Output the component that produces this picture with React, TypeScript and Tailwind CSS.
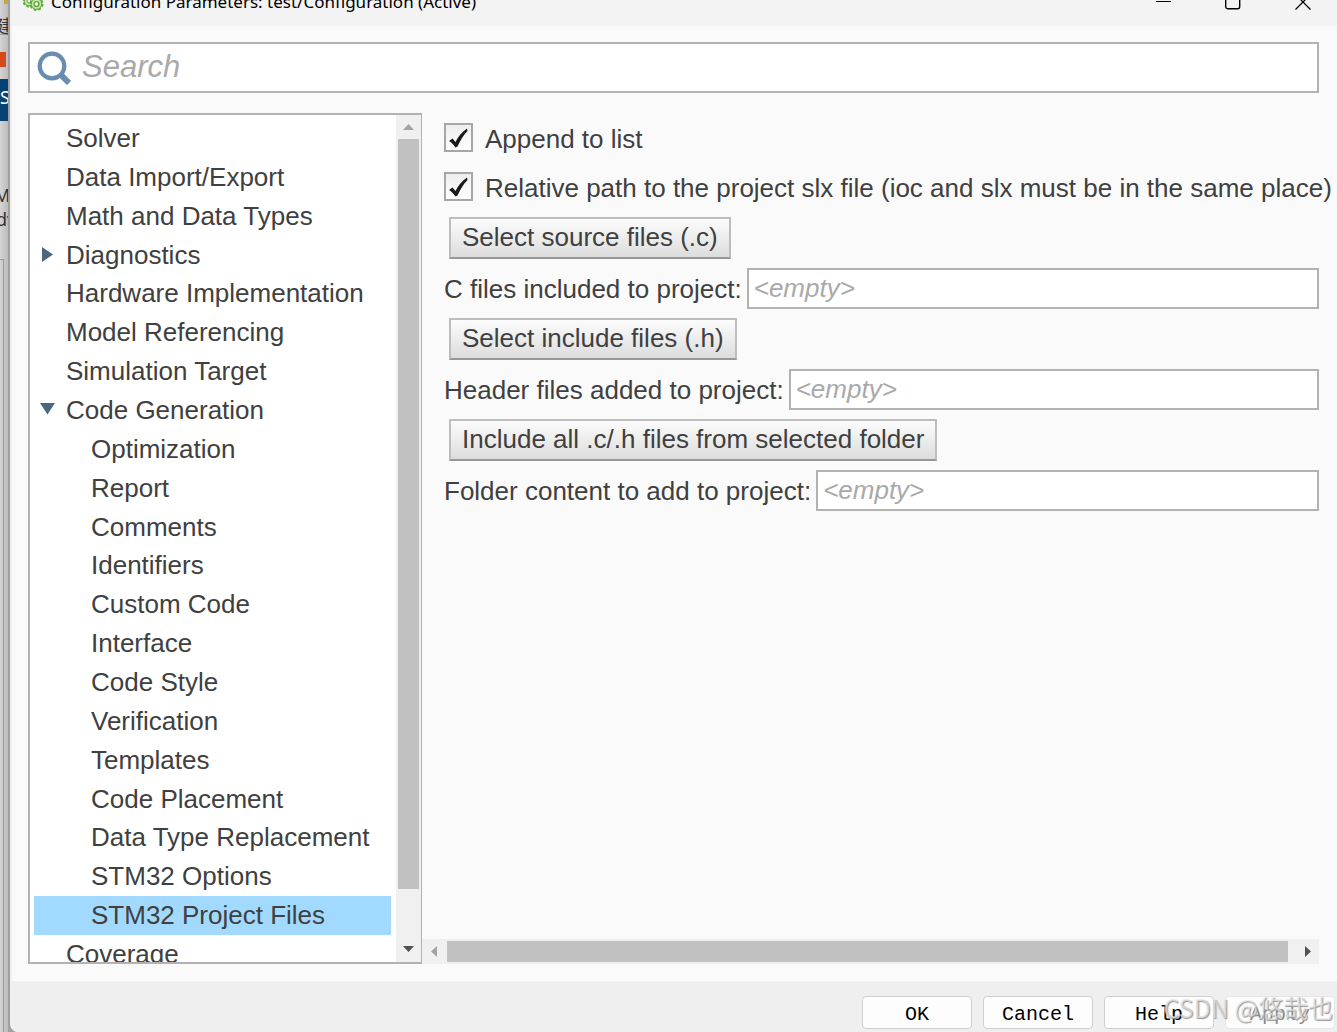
import { useState } from "react";

interface TreeItem {
  label: string;
  nested?: boolean;
  state?: "open" | "closed";
}

interface FileRow {
  id: string;
  action: string;
  label: string;
}

const treeItems: TreeItem[] = [
  { label: "Solver" },
  { label: "Data Import/Export" },
  { label: "Math and Data Types" },
  { label: "Diagnostics", state: "closed" },
  { label: "Hardware Implementation" },
  { label: "Model Referencing" },
  { label: "Simulation Target" },
  { label: "Code Generation", state: "open" },
  { label: "Optimization", nested: true },
  { label: "Report", nested: true },
  { label: "Comments", nested: true },
  { label: "Identifiers", nested: true },
  { label: "Custom Code", nested: true },
  { label: "Interface", nested: true },
  { label: "Code Style", nested: true },
  { label: "Verification", nested: true },
  { label: "Templates", nested: true },
  { label: "Code Placement", nested: true },
  { label: "Data Type Replacement", nested: true },
  { label: "STM32 Options", nested: true },
  { label: "STM32 Project Files", nested: true },
  { label: "Coverage" },
];

const fileRows: FileRow[] = [
  { id: "c-files", action: "Select source files (.c)", label: "C files included to project:" },
  { id: "h-files", action: "Select include files (.h)", label: "Header files added to project:" },
  { id: "folder", action: "Include all .c/.h files from selected folder", label: "Folder content to add to project:" },
];

function GearsIcon() {
  return (
    <svg className="h-5 w-[22px] shrink-0" viewBox="0 0 22 20" fill="none">
      <g stroke="#5da53f" fill="#c4e8a2">
        <circle cx="7" cy="9" r="5.5" strokeWidth="2" strokeDasharray="2.4 1.9" />
        <circle cx="7" cy="9" r="4.8" />
        <circle cx="7" cy="9" r="2" fill="#fff" />
        <circle cx="14.5" cy="12" r="6" strokeWidth="2" strokeDasharray="2.6 2.1" />
        <circle cx="14.5" cy="12" r="5.3" />
        <circle cx="14.5" cy="12" r="2.4" fill="#fff" strokeWidth="1.4" />
      </g>
    </svg>
  );
}

function SearchIcon() {
  return (
    <svg className="h-[34px] w-[34px] shrink-0" viewBox="0 0 34 34" fill="none" stroke="#6a8caf">
      <circle cx="15" cy="15" r="12.3" strokeWidth="4.2" />
      <path d="M23 23 32 32" strokeWidth="6" />
    </svg>
  );
}

function TitleBar() {
  return (
    <header className="-mt-[22px] flex h-12 shrink-0 items-center bg-[#f3f3f3] pl-2.5 pr-[26px]">
      <GearsIcon />
      <h1 className="ml-[7px] flex-1 whitespace-nowrap font-['Noto_Sans'] text-[17px] text-black">
        Configuration Parameters: test/Configuration (Active)
      </h1>
      <div className="flex items-center gap-[54px]">
        <button type="button" aria-label="Minimize">
          <svg className="h-4 w-4" viewBox="0 0 16 16" stroke="#000" fill="none">
            <path d="M1 7.5h15" />
          </svg>
        </button>
        <button type="button" aria-label="Maximize">
          <svg className="h-4 w-4" viewBox="0 0 16 16" stroke="#000" fill="none">
            <rect x=".7" y=".7" width="14" height="14" rx="2" strokeWidth="1.4" />
          </svg>
        </button>
        <button type="button" aria-label="Close">
          <svg className="h-4 w-4" viewBox="0 0 16 16" stroke="#000" fill="none" strokeWidth="1.3">
            <path d="M.5 .5l15 15M15.5 .5l-15 15" />
          </svg>
        </button>
      </div>
    </header>
  );
}

function ConfigTree() {
  const [selected, setSelected] = useState("STM32 Project Files");

  return (
    <nav aria-label="Configuration" className="flex w-[394px] shrink-0 overflow-hidden border-2 border-r border-[#b2b2b2] bg-white">
      <ul className="mt-1 grid h-[855px] flex-1 auto-rows-fr pl-1 pr-[5px]">
        {treeItems.map((item) => (
          <li key={item.label} className="flex">
            <button
              type="button"
              onClick={() => setSelected(item.label)}
              className={`flex w-full items-center whitespace-nowrap pb-px text-left ${item.nested ? "pl-[57px]" : "pl-1.5"} ${
                selected === item.label ? "bg-[#a2d9ff]" : ""
              }`}
            >
              {!item.nested && (
                <svg className="mr-[9px] h-4 w-[17px] shrink-0" viewBox="0 0 17 16" fill="#4d6680">
                  {item.state === "closed" && <path d="M2 0 13 7.5 2 15z" />}
                  {item.state === "open" && <path d="M0 1h15L7.5 12.5z" />}
                </svg>
              )}
              {item.label}
            </button>
          </li>
        ))}
      </ul>
      <div className="flex w-[25px] flex-col items-center bg-[#f0f0f0]">
        <svg className="h-6 w-6 shrink-0" viewBox="0 0 24 24" fill="#a3a3a3">
          <path d="M6 15h11l-5.500-6z" />
        </svg>
        <div className="h-[750px] w-[21px] bg-[#c1c1c1]" />
        <svg className="mt-auto h-6 w-6 shrink-0" viewBox="0 0 24 24" fill="#505050">
          <path d="M6 8h11l-5.500 6z" />
        </svg>
      </div>
    </nav>
  );
}

function CheckField({ id, label }: { id: string; label: string }) {
  const [checked, setChecked] = useState(true);

  return (
    <div className="flex items-start gap-3">
      <span className="relative h-[29px] w-[29px] shrink-0">
        <input
          id={id}
          type="checkbox"
          checked={checked}
          onChange={(e) => setChecked(e.target.checked)}
          className="block h-full w-full appearance-none border-2 border-[#a6a6a6] bg-linear-to-b from-[#eeeeee] to-white"
        />
        {checked && (
          <svg className="pointer-events-none absolute inset-0" viewBox="0 0 29 29" fill="#1a1a1a">
            <path d="M5 18 8.500 15.500 11.500 19C14 14 17.500 9 23 5.500L23.500 8C19 12.500 16 18 13.500 23.500L11.500 24.500C10 22 7.500 19.500 5 18z" />
          </svg>
        )}
      </span>
      <label htmlFor={id} className="whitespace-nowrap leading-8">
        {label}
      </label>
    </div>
  );
}

function SettingsPane() {
  return (
    <section className="flex min-w-0 flex-1 flex-col">
      <div className="flex flex-col pl-[22px] pt-2.5">
        <div className="mb-[13px] flex flex-col gap-[17px]">
          <CheckField id="append" label="Append to list" />
          <CheckField id="relative" label="Relative path to the project slx file (ioc and slx must be in the same place)" />
        </div>
        <div className="flex flex-col gap-[9px]">
          {fileRows.map((row) => (
            <div key={row.id} className="flex flex-col gap-[9px]">
              <button
                type="button"
                className="ml-[5px] h-[42px] self-start border-2 border-[#bdbdbd] border-b-[#979797] bg-linear-to-b from-[#fcfcfc] to-[#dddddd] px-[11px] pb-0.5"
              >
                {row.action}
              </button>
              <div className="flex h-[41px] items-center gap-[5px]">
                <label htmlFor={row.id} className="whitespace-nowrap">
                  {row.label}
                </label>
                <input
                  id={row.id}
                  type="text"
                  placeholder="<empty>"
                  className="h-full min-w-0 flex-1 border-2 border-[#b2b2b2] bg-white px-[5px] placeholder:italic placeholder:text-[#a9a9a9]"
                />
              </div>
            </div>
          ))}
        </div>
      </div>
      <div className="mt-auto flex h-[25px] items-center bg-[#f0f0f0]">
        <svg className="h-[25px] w-[25px] shrink-0" viewBox="0 0 25 25" fill="#a3a3a3">
          <path d="M15 7v11l-6-5.500z" />
        </svg>
        <div className="h-[21px] flex-1 bg-[#c1c1c1]" />
        <svg className="ml-1.5 h-[25px] w-[25px] shrink-0" viewBox="0 0 25 25" fill="#505050">
          <path d="M11 7v11l6-5.500z" />
        </svg>
      </div>
    </section>
  );
}

function Footer() {
  const button = "h-[33px] w-[110px] rounded border bg-[#fdfdfd] pt-1 font-['Liberation_Mono',monospace] text-[20px] leading-6";

  return (
    <footer className="relative flex h-[52px] shrink-0 items-start justify-end gap-[11px] border-t border-white bg-[#efefef] pr-0.5 pt-[15px]">
      <button type="button" className={`${button} border-[#d0d0d0] text-black`}>OK</button>
      <button type="button" className={`${button} border-[#d0d0d0] text-black`}>Cancel</button>
      <button type="button" className={`${button} border-[#d0d0d0] text-black`}>Help</button>
      <button type="button" disabled className={`${button} border-[#e6e6e6] text-[#8a8a8a]`}>Apply</button>
      <span className="pointer-events-none absolute right-1 top-2.5 whitespace-nowrap font-['Noto_Sans_CJK_SC',sans-serif] text-[25px] leading-8 text-[#e6e6e6]/70 [text-shadow:1px_1px_1px_#999999]">
        CSDN @悠哉也
      </span>
    </footer>
  );
}

// sliver of the window that sits behind the dialog
function BackgroundWindow() {
  return (
    <div aria-hidden="true" className="w-2.5 shrink-0 overflow-hidden border-r-2 border-[#a0a0a0] bg-linear-to-r from-[#d4d4d4] to-[#bcbcbc] text-[#333333]">
      <div className="h-[11px]">
        <div className="ml-1 h-1 bg-[#c9a43b]" />
      </div>
      <div className="h-[24px] border-b border-[#999999] font-['Noto_Sans_CJK_SC',sans-serif] text-[18px] leading-[28px]">
        <span className="-ml-1">建</span>
      </div>
      <div className="mt-[17px] h-[15px] w-1.5 bg-[#d34a1c]" />
      <div className="mt-3 h-[42px] bg-[#064273] font-['Noto_Sans'] text-[18px] leading-9 text-white">S</div>
      <div className="mt-[62px] font-['Noto_Sans'] text-[18px] leading-6">
        <div className="-ml-1.5">M</div>
        <div className="-ml-1">dv</div>
      </div>
      <div className="mr-1 mt-7 h-[773px] border-r border-t border-[#999999]" />
    </div>
  );
}

export default function App() {
  return (
    <div className="flex h-screen overflow-hidden bg-[#a0a0a0] font-['Liberation_Sans',Arial,sans-serif] text-[26px] leading-[30px] text-[#404040]">
      <BackgroundWindow />
      <div className="flex min-w-0 flex-1 flex-col overflow-hidden rounded-bl-lg border-l-2 border-[#f0f0f0] bg-[#fafafa]">
        <TitleBar />
        <main className="flex min-h-0 flex-1 flex-col gap-5 pb-4 pl-4 pr-[18px] pt-4">
          <div className="flex h-[51px] shrink-0 items-center gap-[11px] border-2 border-[#b2b2b2] bg-white pl-[7px]">
            <SearchIcon />
            <input
              type="search"
              aria-label="Search"
              placeholder="Search"
              className="h-full min-w-0 flex-1 pb-0.5 text-[31px] placeholder:italic placeholder:text-[#a9a9a9]"
            />
          </div>
          <div className="flex min-h-0 flex-1">
            <ConfigTree />
            <SettingsPane />
          </div>
        </main>
        <Footer />
      </div>
    </div>
  );
}
